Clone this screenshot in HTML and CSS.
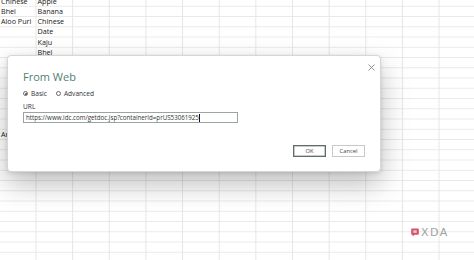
FILE: index.html
```html
<!DOCTYPE html>
<html lang="en">
<head>
  <meta charset="UTF-8" />
  <meta name="viewport" content="width=device-width, initial-scale=1.0" />
  <title>From Web</title>
  <link rel="stylesheet" href="styles.css">
</head>
<body>
  <div class="sheet">
    <div class="cells">
      <div class="cell">Chinese</div><div class="cell">Apple</div>
      <div class="cell">Bhel</div><div class="cell">Banana</div>
      <div class="cell">Aloo Puri</div><div class="cell">Chinese</div>
      <div class="cell"></div><div class="cell">Date</div>
      <div class="cell"></div><div class="cell">Kaju</div>
      <div class="cell"></div><div class="cell">Bhel</div>
      <div class="cell"></div><div class="cell"></div>
      <div class="cell"></div><div class="cell"></div>
      <div class="cell"></div><div class="cell"></div>
      <div class="cell"></div><div class="cell"></div>
      <div class="cell"></div><div class="cell"></div>
      <div class="cell"></div><div class="cell"></div>
      <div class="cell"></div><div class="cell"></div>
      <div class="cell">Ar</div><div class="cell"></div>
    </div>

    <div class="dialog">
      <button class="close" aria-label="Close">
        <svg width="7" height="7" viewBox="0 0 7 7"><path d="M0.5 0.5 L6.5 6.5 M6.5 0.5 L0.5 6.5" stroke="#777" stroke-width="0.8" fill="none"/></svg>
      </button>
      <h1 class="title">From Web</h1>
      <div class="modes">
        <label class="mode"><span class="radio checked"></span>Basic</label>
        <label class="mode"><span class="radio"></span>Advanced</label>
      </div>
      <div class="field-label">URL</div>
      <div class="url-box">https://www.idc.com/getdoc.jsp?containerId=prUS53061925<span class="caret"></span></div>
      <div class="actions">
        <button class="btn primary">OK</button>
        <button class="btn">Cancel</button>
      </div>
    </div>

    <div class="brand">
      <svg class="brand-icon" width="8" height="9" viewBox="0 0 8 9">
        <path d="M1 0.5 H7 a0.8 0.8 0 0 1 0.8 0.8 V6 a0.8 0.8 0 0 1 -0.8 0.8 H3.5 L1.6 8.6 V6.8 H1 a0.8 0.8 0 0 1 -0.8 -0.8 V1.3 a0.8 0.8 0 0 1 0.8 -0.8 Z" fill="#d9506a"/>
        <rect x="2.3" y="2.3" width="3.4" height="2.6" fill="#f3c3cc"/>
      </svg>
      <span class="brand-text">XDA</span>
    </div>
  </div>
</body>
</html>
```

FILE: styles.css
```css
* {
  margin: 0;
  padding: 0;
  box-sizing: border-box;
}
body {
  width: 474px;
  height: 260px;
  overflow: hidden;
  background: #fff;
  font-family: "Open Sans", "Liberation Sans", sans-serif;
}
.sheet {
  position: relative;
  overflow: hidden;
  width: 474px;
  height: 260px;
  background-color: #fff;
  background-image:
    linear-gradient(to right, #e6e6e6 1px, transparent 1px),
    linear-gradient(to bottom, #e9e9e9 1px, transparent 1px);
  background-size: 36.65px 100%, 100% 10.25px;
  background-position: 35.5px 0, 0 5.8px;
}
.cells {
  display: grid;
  grid-template-columns: 36.5px 36.5px;
  grid-auto-rows: 10.25px;
  margin-top: -4.4px;
}
.cell {
  font-size: 7.2px;
  line-height: 10.25px;
  color: #222;
  padding-left: 1px;
  white-space: nowrap;
}

/* dialog */
.dialog {
  position: absolute;
  left: 7px;
  top: 55px;
  width: 374px;
  height: 117px;
  background: #fff;
  border: 1px solid #d6d6d6;
  border-radius: 4px;
  box-shadow: 0 12px 28px rgba(0, 0, 0, 0.26), 0 1px 4px rgba(0, 0, 0, 0.12);
  padding: 14px 15px 0 15px;
}
.close {
  position: absolute;
  right: 5px;
  top: 3px;
  border: none;
  background: none;
  width: 7px;
  height: 7px;
}
.title {
  font-family: "Open Sans", sans-serif;
  font-weight: 400;
  font-size: 11px;
  line-height: 14px;
  color: #4f7f71;
}
.modes {
  display: flex;
  gap: 9px;
  margin-top: 5px;
  font-size: 6.6px;
  line-height: 9px;
  color: #333;
}
.mode {
  display: flex;
  align-items: center;
  gap: 3px;
}
.radio {
  width: 5px;
  height: 5px;
  border: 0.7px solid #666;
  border-radius: 50%;
  position: relative;
}
.radio.checked::after {
  content: "";
  position: absolute;
  left: 0.8px;
  top: 0.8px;
  width: 2px;
  height: 2px;
  border-radius: 50%;
  background: #444;
}
.field-label {
  font-size: 6.6px;
  color: #333;
  margin-top: 5px;
  line-height: 8px;
}
.url-box {
  margin-top: 1px;
  width: 215px;
  height: 11px;
  border: 1px solid #9aa5a1;
  font-size: 6.2px;
  line-height: 9px;
  padding-left: 2px;
  color: #333;
  white-space: nowrap;
}
.caret {
  display: inline-block;
  width: 1px;
  height: 8px;
  background: #111;
  vertical-align: -1.5px;
}
.actions {
  display: flex;
  justify-content: flex-end;
  gap: 6px;
  margin-top: 22px;
}
.btn {
  width: 33px;
  height: 12px;
  background: #fff;
  border: 1px solid #c8c8c8;
  font-family: "Open Sans", sans-serif;
  font-size: 5.8px;
  color: #444;
}
.btn.primary {
  border-color: #5f6e69;
  box-shadow: inset 0 0 0 0.5px #8c9995;
}

/* watermark */
.brand {
  position: absolute;
  left: 411px;
  top: 227px;
  display: flex;
  align-items: center;
  gap: 2px;
}
.brand-text {
  font-family: "DejaVu Sans", sans-serif;
  font-size: 11px;
  letter-spacing: 1.5px;
  color: #a0a0a0;
  line-height: 11px;
}
```
